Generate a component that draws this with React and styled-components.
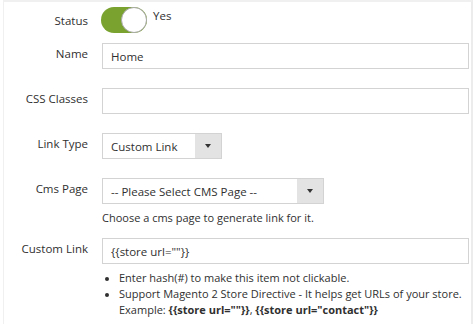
import React from "react";
import styled, { createGlobalStyle } from "styled-components";

const Global = createGlobalStyle`
  html, body {
    margin: 0;
    padding: 0;
    background: #ffffff;
  }
  body {
    font-family: "Open Sans", "Noto Sans", sans-serif;
    color: #333333;
  }
`;

const Panel = styled.div`
  width: 470px;
  height: 324px;
  box-sizing: border-box;
  margin-left: 3px;
  border-top: 2px solid #f0f0f0;
  border-left: 1px solid #f0f0f0;
  border-right: 2px solid #ececec;
  padding-top: 3px;
`;

const Row = styled.div`
  display: grid;
  grid-template-columns: 84px 1fr;
  column-gap: 14px;
  margin-bottom: ${(p) => p.$gap ?? 19}px;
`;

const Label = styled.div`
  text-align: right;
  font-size: 11.5px;
  line-height: 16px;
  padding-top: ${(p) => p.$top ?? 3}px;
  color: #303030;
`;

const Field = styled.div`
  display: flex;
  flex-direction: column;
  padding-right: 2px;
`;

const Input = styled.div`
  height: 26px;
  box-sizing: border-box;
  border: 1px solid #d3d3d3;
  background: #fff;
  font-size: 11.5px;
  display: flex;
  align-items: center;
  padding: 0 8px;
  color: #303030;
`;

const Select = styled.div`
  height: 26px;
  width: ${(p) => p.$width}px;
  box-sizing: border-box;
  border: 1px solid #d3d3d3;
  display: flex;
  font-size: 11.5px;
  color: #303030;
`;

const SelectText = styled.div`
  flex: 1;
  display: flex;
  align-items: center;
  padding-left: 8px;
  background: #fff;
`;

const SelectArrow = styled.div`
  width: 26px;
  background: #e3e3e3;
  display: flex;
  align-items: center;
  justify-content: center;
  &::after {
    content: "";
    border-left: 3.5px solid transparent;
    border-right: 3.5px solid transparent;
    border-top: 4px solid #333;
  }
`;

const Toggle = styled.div`
  display: flex;
  align-items: flex-start;
  gap: 6px;
  font-size: 11.5px;
  color: #303030;
`;

const Track = styled.div`
  width: 46px;
  height: 26px;
  border-radius: 13px;
  background: #79a22e;
  display: flex;
  justify-content: flex-end;
  margin-top: 2px;
  margin-left: -1px;
`;

const Knob = styled.div`
  width: 26px;
  height: 26px;
  box-sizing: border-box;
  border-radius: 50%;
  background: #fff;
  border: 1px solid #a8a8a8;
`;

const YesText = styled.span`
  margin-top: 3px;
`;

const Note = styled.div`
  font-size: 11px;
  line-height: 16px;
  margin-top: 6px;
  color: #303030;
`;

const List = styled.ul`
  margin: 6px 0 0;
  padding-left: 17px;
  font-size: 11px;
  line-height: 16px;
  color: #303030;
  li::marker {
    font-size: 10px;
  }
`;

export default function App() {
  return (
    <>
      <Global />
      <Panel>
        <Row $gap={10}>
          <Label $top={8}>Status</Label>
          <Toggle>
            <Track>
              <Knob />
            </Track>
            <YesText>Yes</YesText>
          </Toggle>
        </Row>
        <Row>
          <Label>Name</Label>
          <Field>
            <Input>Home</Input>
          </Field>
        </Row>
        <Row>
          <Label>CSS Classes</Label>
          <Field>
            <Input />
          </Field>
        </Row>
        <Row>
          <Label>Link Type</Label>
          <Field>
            <Select $width={120}>
              <SelectText>Custom Link</SelectText>
              <SelectArrow />
            </Select>
          </Field>
        </Row>
        <Row $gap={12}>
          <Label>Cms Page</Label>
          <Field>
            <Select $width={222}>
              <SelectText>-- Please Select CMS Page --</SelectText>
              <SelectArrow />
            </Select>
            <Note>Choose a cms page to generate link for it.</Note>
          </Field>
        </Row>
        <Row $gap={0}>
          <Label>Custom Link</Label>
          <Field>
            <Input>{'{{store url=""}}'}</Input>
            <List>
              <li>Enter hash(#) to make this item not clickable.</li>
              <li>
                Support Magento 2 Store Directive - It helps get URLs of your
                store.
                <br />
                Example: <b>{'{{store url=""}}'}</b>,{" "}
                <b>{'{{store url="contact"}}'}</b>
              </li>
            </List>
          </Field>
        </Row>
      </Panel>
    </>
  );
}
